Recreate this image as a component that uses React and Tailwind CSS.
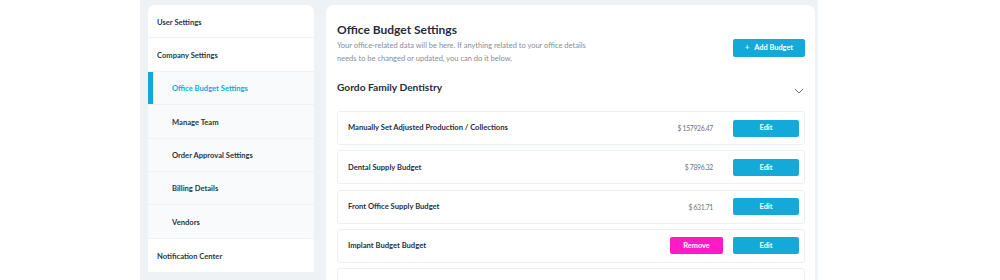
import React from "react";

const font = { fontFamily: "Lato, 'Noto Sans', sans-serif" };

function SideItem({ label, sub, active, last }) {
  return (
    <div
      className={`relative h-[33.4px] flex items-center ${last ? "" : "border-b border-[#eff2f4]"} ${sub ? "bg-[#f9fafb] pl-[24px]" : "bg-white pl-[9px]"}`}
    >
      {active && <div className="absolute left-0 top-0 bottom-0 w-[5px] bg-[#13a9d6]" />}
      <span className={`text-[7.6px] font-bold mt-[2px] ${active ? "text-[#13a9d6]" : "text-[#2b3646]"}`}>{label}</span>
    </div>
  );
}

function Row({ label, amount, remove }) {
  return (
    <div className="h-[34px] border border-[#edf0f2] rounded-[3px] flex items-center pl-[10px] pr-[5px]">
      <span className="text-[7.6px] font-bold text-[#243044] flex-1">{label}</span>
      {amount && <span className="text-[6.8px] tracking-[-0.3px] text-[#6d7480] mr-[20px]">{amount}</span>}
      {remove && (
        <div className="w-[53px] h-[17px] rounded-[2px] bg-[#fd1bc6] flex items-center justify-center text-white text-[7.4px] font-bold mr-[10px]">
          Remove
        </div>
      )}
      <div className="w-[66px] h-[17px] rounded-[2px] bg-[#13aad9] flex items-center justify-center text-white text-[7.4px] font-bold">
        Edit
      </div>
    </div>
  );
}

export default function App() {
  return (
    <div className="w-[1000px] h-[280px] bg-white flex overflow-hidden" style={font}>
      <div className="ml-[140px] w-[678px] h-[280px] bg-[#eef2f5] pt-[5px] pl-[8px] pr-[3px] flex gap-[12px]">
        <div className="w-[166px] self-start rounded-t-[7px] bg-white overflow-hidden">
          <SideItem label="User Settings" />
          <SideItem label="Company Settings" />
          <SideItem label="Office Budget Settings" sub active />
          <SideItem label="Manage Team" sub />
          <SideItem label="Order Approval Settings" sub />
          <SideItem label="Billing Details" sub />
          <SideItem label="Vendors" sub />
          <SideItem label="Notification Center" last />
        </div>
        <div className="w-[489px] h-[290px] rounded-t-[8px] bg-white pt-[17px] pl-[11px] pr-[10px]">
          <div className="flex items-start justify-between">
            <div>
              <div className="text-[12px] leading-[16px] font-bold text-[#1f2d42]">Office Budget Settings</div>
              <div className="mt-[1px] text-[7.5px] leading-[13px] text-[#878d96]">
                Your office-related data will be here. If anything related to your office details
                <br />
                needs to be changed or updated, you can do it below.
              </div>
            </div>
            <div className="mt-[17px] w-[72px] h-[18px] rounded-[2px] bg-[#13aad9] flex items-center justify-center text-white text-[7.4px] font-bold gap-[5px]">
              <span>+</span>
              <span>Add Budget</span>
            </div>
          </div>
          <div className="mt-[16px] flex items-center justify-between h-[14px]">
            <span className="text-[10.2px] font-bold text-[#1f2d42]">Gordo Family Dentistry</span>
            <svg width="10" height="6" viewBox="0 0 10 6" className="mr-[1px] mt-[6px]">
              <path d="M1 1 L5 5 L9 1" fill="none" stroke="#6b7280" strokeWidth="1" />
            </svg>
          </div>
          <div className="mt-[16px] flex flex-col gap-[5.3px]">
            <Row label="Manually Set Adjusted Production / Collections" amount="$ 157926.47" />
            <Row label="Dental Supply Budget" amount="$ 7896.32" />
            <Row label="Front Office Supply Budget" amount="$ 631.71" />
            <Row label="Implant Budget Budget" remove />
            <div className="h-[34px] border border-[#edf0f2] rounded-[3px]" />
          </div>
        </div>
      </div>
    </div>
  );
}
